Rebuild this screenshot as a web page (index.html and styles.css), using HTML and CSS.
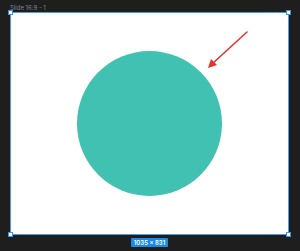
FILE: index.html
```html
<!DOCTYPE html>
<html>
<head>
  <link rel="stylesheet" href="styles.css">
</head>
<body>
  <div class="canvas">
    <div class="frame-label">Slide 16:9 - 1</div>
    <div class="frame">
      <div class="circle"></div>
      <svg class="arrow" width="50" height="45" viewBox="0 0 50 45">
        <line x1="47" y1="2" x2="12" y2="34" stroke="#e8312b" stroke-width="1.6" stroke-linecap="round"/>
        <polygon points="8,38 11,29 17,35" fill="#e8312b"/>
      </svg>
      <span class="handle tl"></span>
      <span class="handle tr"></span>
      <span class="handle bl"></span>
      <span class="handle br"></span>
    </div>
    <div class="badge-row">
      <div class="size-badge">1035 × 831</div>
    </div>
  </div>
</body>
</html>
```

FILE: styles.css
```css
html, body { margin: 0; padding: 0; background: #1e1e1e; }
body { width: 300px; height: 251px; overflow: hidden; font-family: Inter, "Noto Sans", sans-serif; }
.canvas {
  padding: 3px 0 0 10px;
  width: 279px;
}
.frame-label {
  color: #7f8590;
  font-size: 6px;
  line-height: 9px;
  height: 9px;
  white-space: nowrap;
}
.frame {
  position: relative;
  box-sizing: border-box;
  width: 279px;
  height: 223px;
  background: #ffffff;
  border: 1px solid #4a9ee6;
  display: flex;
  align-items: center;
  justify-content: center;
}
.circle {
  width: 145px;
  height: 145px;
  border-radius: 50%;
  background: #41c1b1;
}
.arrow {
  position: absolute;
  left: 189px;
  top: 17px;
}
.handle {
  position: absolute;
  box-sizing: border-box;
  width: 5px;
  height: 5px;
  background: #ffffff;
  border: 1px solid #3b95e4;
}
.handle.tl { left: -3px; top: -3px; }
.handle.tr { right: -3px; top: -3px; }
.handle.bl { left: -3px; bottom: -3px; }
.handle.br { right: -3px; bottom: -3px; }
.badge-row {
  display: flex;
  justify-content: center;
  margin-top: 3px;
}
.size-badge {
  background: #1b8ae6;
  color: #ffffff;
  font-size: 6px;
  font-weight: 600;
  line-height: 9px;
  height: 9px;
  padding: 0 3px;
  border-radius: 1px;
  white-space: nowrap;
}
```
